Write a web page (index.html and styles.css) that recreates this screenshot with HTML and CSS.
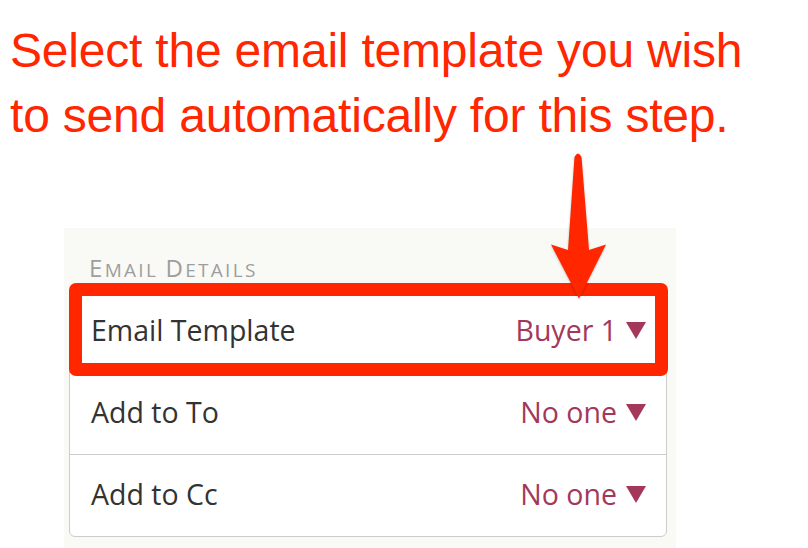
FILE: index.html
```html
<!DOCTYPE html>
<html lang="en">
<head>
<meta charset="utf-8">
<title>Email Details</title>
<link rel="stylesheet" href="styles.css">
</head>
<body>
<p class="instruction">Select the email template you wish<br>to send automatically for this step.</p>
<section class="panel">
  <h2 class="panel-title"><span class="initial">E</span>mail <span class="initial">D</span>etails</h2>
  <ul class="fields">
    <li class="field field-highlight">
      <span class="field-label">Email Template</span>
      <span class="field-value">Buyer 1<span class="caret"></span></span>
    </li>
    <li class="field">
      <span class="field-label">Add to To</span>
      <span class="field-value">No one<span class="caret"></span></span>
    </li>
    <li class="field">
      <span class="field-label">Add to Cc</span>
      <span class="field-value">No one<span class="caret"></span></span>
    </li>
  </ul>
</section>
<svg class="pointer" width="70" height="160" viewBox="540 150 70 160" aria-hidden="true">
  <path d="M574.5 157 Q578 150 581.5 157 L589 250 L606 244.5 L579 298.5 L551 244.5 L568 250 Z" fill="#ff2600"/>
</svg>
</body>
</html>
```
FILE: styles.css
```css
html, body {
  margin: 0;
  padding: 0;
  background: #ffffff;
}

body {
  width: 808px;
  height: 548px;
  overflow: hidden;
  position: relative;
  font-family: "Open Sans", "Lato", sans-serif;
}

.instruction {
  margin: 0;
  padding: 18px 0 0 10px;
  font-family: "Liberation Sans", Arial, sans-serif;
  font-size: 48px;
  line-height: 65px;
  color: #ff2600;
  letter-spacing: -0.2px;
}

.panel {
  margin: 80px 0 0 64px;
  width: 612px;
  height: 320px;
  box-sizing: border-box;
  background: #f9f9f6;
  padding: 25px 9px 0 5px;
}

.panel-title {
  margin: 0 0 0 20px;
  font-size: 19px;
  line-height: 29px;
  font-weight: 400;
  text-transform: uppercase;
  letter-spacing: 2.3px;
  color: #9e9e9e;
  height: 37px;
}

.initial {
  font-size: 24px;
}

.fields {
  list-style: none;
  margin: 0;
  padding: 0;
  background: #ffffff;
  border: 1px solid #cccccc;
  border-radius: 6px;
}

.field {
  display: flex;
  align-items: center;
  justify-content: space-between;
  height: 81px;
  box-sizing: content-box;
  padding: 0 20px 0 21px;
  font-size: 28.5px;
  color: #333333;
}

.field-label,
.field-value {
  position: relative;
  top: -2px;
}

.field + .field {
  border-top: 1px solid #cccccc;
}

.field-highlight {
  position: relative;
}

.field-highlight::after {
  content: "";
  position: absolute;
  left: -1px;
  right: -2px;
  top: -8px;
  bottom: -4px;
  border: 13px solid #ff2600;
  border-radius: 7px;
}

.field-value {
  display: flex;
  align-items: center;
  color: #a3385b;
}

.caret {
  width: 0;
  height: 0;
  margin-left: 9px;
  margin-top: 2px;
  border-left: 10px solid transparent;
  border-right: 10px solid transparent;
  border-top: 17px solid #a3385b;
}

.pointer {
  position: absolute;
  left: 540px;
  top: 150px;
  filter: drop-shadow(0 1px 1px rgba(0, 0, 0, 0.25));
}
```
